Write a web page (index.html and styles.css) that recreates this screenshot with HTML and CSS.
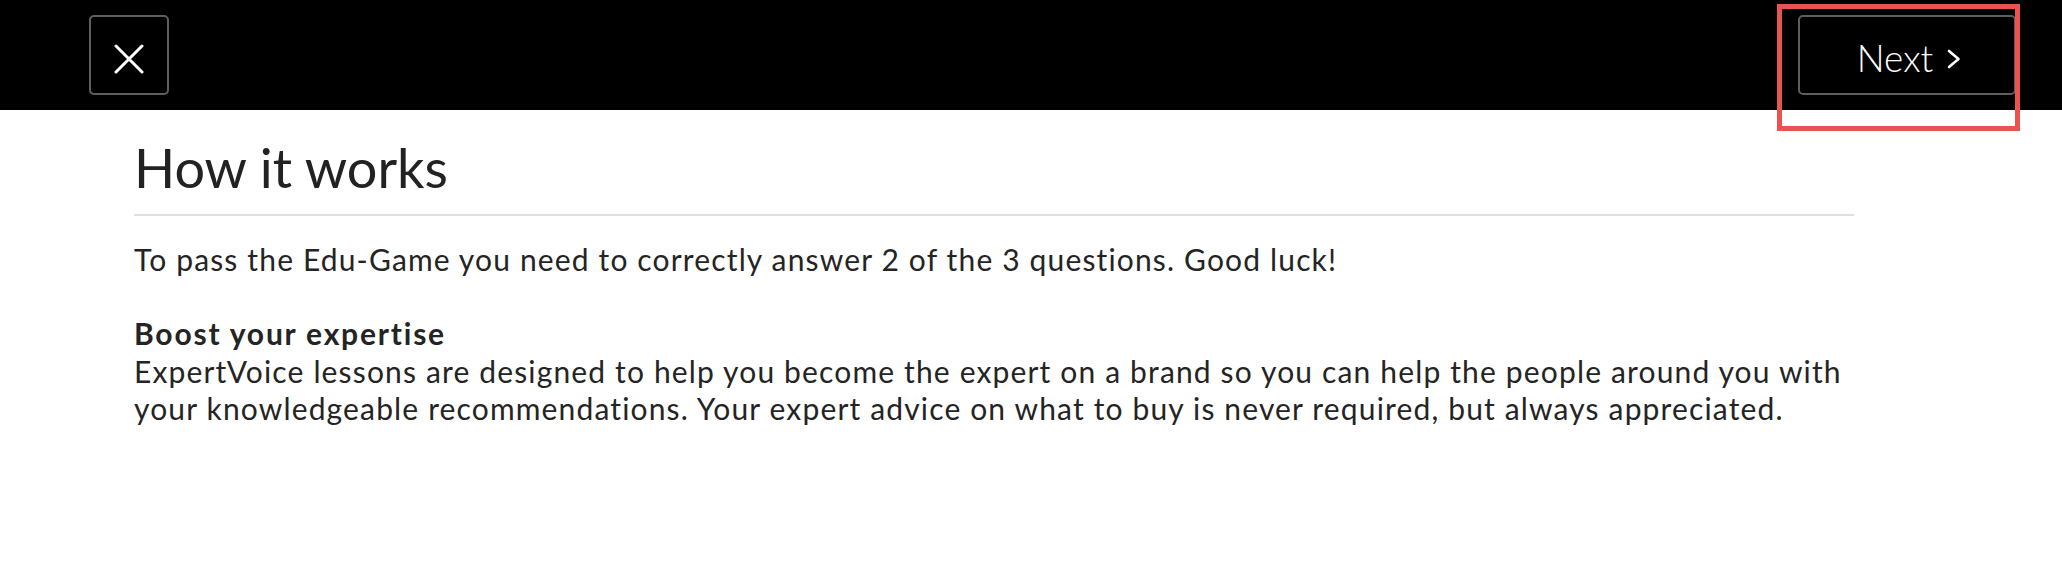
FILE: index.html
```html
<!DOCTYPE html>
<html lang="en">
<head>
<meta charset="utf-8">
<title>How it works</title>
<link rel="stylesheet" href="styles.css">
</head>
<body>
<header class="topbar">
  <button class="close-btn" aria-label="Close">
    <svg width="30" height="30" viewBox="0 0 30 30" aria-hidden="true"><path d="M2 2 L28 28 M28 2 L2 28" stroke="#fff" stroke-width="3" stroke-linecap="round" fill="none"/></svg>
  </button>
  <button class="next-btn">
    <span>Next</span>
    <svg width="14" height="20" viewBox="0 0 14 20" aria-hidden="true"><path d="M2 2 L11.5 10 L2 18" stroke="#fff" stroke-width="2.6" stroke-linecap="round" stroke-linejoin="round" fill="none"/></svg>
  </button>
  <div class="highlight"></div>
</header>
<main class="content">
  <h1 class="title">How it works</h1>
  <p class="intro">To pass the Edu-Game you need to correctly answer 2 of the 3 questions. Good luck!</p>
  <p class="boost"><strong>Boost your expertise</strong><br>ExpertVoice lessons are designed to help you become the expert on a brand so you can help the people around you with your knowledgeable recommendations. Your expert advice on what to buy is never required, but always appreciated.</p>
</main>
</body>
</html>
```

FILE: styles.css
```css
* { box-sizing: border-box; }
html, body { margin: 0; padding: 0; background: #fff; }
body {
  font-family: "Source Sans Pro", Lato, "Noto Sans", sans-serif;
  color: #242424;
}
.topbar {
  position: relative;
  height: 110px;
  background: #000;
  display: flex;
  justify-content: space-between;
  align-items: flex-start;
  padding: 15px 46px 0 89px;
}
.close-btn {
  width: 80px;
  height: 80px;
  background: #000;
  border: 2px solid #5e5e5e;
  border-radius: 5px;
  display: flex;
  align-items: center;
  justify-content: center;
  padding: 8px 0 0 0;
  cursor: pointer;
}
.next-btn {
  width: 218px;
  height: 80px;
  background: #000;
  border: 2px solid #5e5e5e;
  border-radius: 5px;
  display: flex;
  align-items: center;
  justify-content: center;
  gap: 14px;
  padding: 4px 0 0 4px;
  color: #fff;
  font-family: Lato, "Noto Sans", sans-serif;
  font-weight: 300;
  font-size: 37px;
  cursor: pointer;
}
.next-btn svg { margin-top: 3px; }
.highlight {
  position: absolute;
  left: 1777px;
  top: 4px;
  width: 243px;
  height: 127px;
  border: 5px solid #e9554d;
  pointer-events: none;
}
.content {
  width: 1720px;
  margin-left: 134px;
}
.title {
  margin: 26px 0 0 0;
  font-size: 54px;
  font-weight: 400;
  line-height: 1.2;
  padding-bottom: 13px;
  border-bottom: 2px solid #e0e0e0;
  color: #222;
}
.intro, .boost {
  font-size: 30px;
  line-height: 37.5px;
  letter-spacing: 1.15px;
  margin: 0;
}
.intro { margin-top: 25px; }
.boost { margin-top: 37px; }
.boost strong { font-weight: 700; letter-spacing: 1.8px; }
```
